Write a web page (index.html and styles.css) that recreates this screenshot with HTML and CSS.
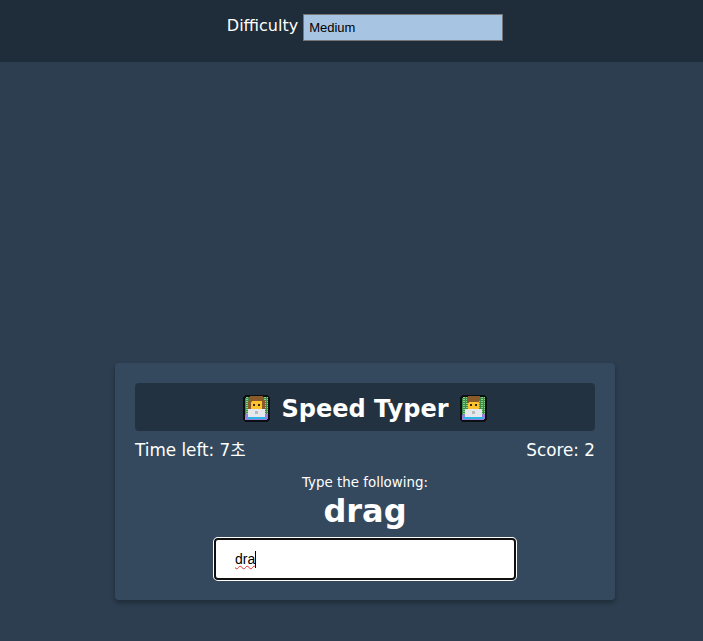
FILE: index.html
```html
<!DOCTYPE html>
<html lang="en">
<head>
    <meta charset="UTF-8">
    <meta name="viewport" content="width=device-width, initial-scale=1.0">
    <title>Speed Typer</title>
    <link rel="stylesheet" href="styles.css">
</head>
<body>
    <!-- Difficulty bar -->
    <div class="settings">
        <label class="settings-label" for="difficulty">Difficulty</label>
        <div class="difficulty-select" id="difficulty">Medium</div>
    </div>

    <div class="stage">
        <div class="game-card">
            <h2 class="game-title">
                <svg class="emoji" viewBox="0 0 27 27" shape-rendering="crispEdges">
                    <defs>
                        <pattern id="matrix" width="3" height="2" patternUnits="userSpaceOnUse">
                            <rect width="3" height="2" fill="#3f8a4a"/>
                            <rect width="2" height="1" fill="#86d283"/>
                        </pattern>
                    </defs>
                    <rect width="27" height="27" rx="4" fill="#0b0f14"/>
                    <rect x="2" y="2" width="23" height="23" rx="2" fill="url(#matrix)"/>
                    <rect x="2" y="19" width="23" height="6" rx="2" fill="#9a7fd8"/>
                    <rect x="6" y="1" width="15" height="6" rx="3" fill="#8a5a2b"/>
                    <rect x="5" y="5" width="17" height="10" rx="2" fill="#8a5a2b"/>
                    <rect x="8" y="6" width="11" height="9" rx="2" fill="#fdc22f"/>
                    <rect x="10" y="9" width="2" height="2" fill="#3a2a10"/>
                    <rect x="15" y="9" width="2" height="2" fill="#3a2a10"/>
                    <rect x="5" y="14" width="17" height="9" fill="#e6e8eb"/>
                    <rect x="12" y="16" width="3" height="3" fill="#b5bbc1"/>
                    <rect x="4" y="22" width="19" height="2" fill="#2fb4e6"/>
                </svg>
                Speed Typer
                <svg class="emoji" viewBox="0 0 27 27" shape-rendering="crispEdges">
                    <rect width="27" height="27" rx="4" fill="#0b0f14"/>
                    <rect x="2" y="2" width="23" height="23" rx="2" fill="url(#matrix)"/>
                    <rect x="2" y="19" width="23" height="6" rx="2" fill="#9a7fd8"/>
                    <rect x="7" y="1" width="13" height="5" rx="2" fill="#8a5a2b"/>
                    <rect x="7" y="5" width="12" height="3" fill="#8a5a2b"/>
                    <rect x="8" y="7" width="11" height="8" rx="2" fill="#fdc22f"/>
                    <rect x="10" y="9" width="2" height="2" fill="#3a2a10"/>
                    <rect x="15" y="9" width="2" height="2" fill="#3a2a10"/>
                    <rect x="5" y="14" width="17" height="9" fill="#e6e8eb"/>
                    <rect x="12" y="16" width="3" height="3" fill="#b5bbc1"/>
                    <rect x="4" y="22" width="19" height="2" fill="#2fb4e6"/>
                </svg>
            </h2>

            <div class="game-stats">
                <span>Time left: 7초</span>
                <span>Score: 2</span>
            </div>

            <div class="prompt">Type the following:</div>
            <div class="word">drag</div>

            <div class="word-input"><span class="typed">dra</span><span class="caret"></span></div>
        </div>
    </div>
</body>
</html>
```

FILE: styles.css
```css
* {
    box-sizing: border-box;
    margin: 0;
    padding: 0;
}

body {
    background: #2c3e50;
    color: #fff;
    font-family: Verdana, "DejaVu Sans", "Noto Sans CJK KR", sans-serif;
    height: 641px;
    display: flex;
    flex-direction: column;
    overflow: hidden;
}

.settings {
    height: 62px;
    background: #1f2c39;
    display: flex;
    justify-content: center;
    align-items: flex-start;
    gap: 5px;
    padding: 14px 0 0 27px;
}

.settings-label {
    font-size: 16px;
    line-height: 24px;
}

.difficulty-select {
    width: 200px;
    height: 27px;
    background: #a7c5e3;
    border: 1px solid #767676;
    color: #000;
    font-family: "Liberation Sans", Arial, sans-serif;
    font-size: 13px;
    line-height: 25px;
    padding-left: 5px;
}

.stage {
    flex: 1;
    display: flex;
    justify-content: center;
    align-items: flex-end;
    padding: 0 0 41px 27px;
}

.game-card {
    width: 500px;
    background: #34495e;
    border-radius: 4px;
    padding: 20px 20px 19px;
    box-shadow: 0 3px 5px rgba(0, 0, 0, 0.3);
    display: flex;
    flex-direction: column;
    align-items: center;
}

.game-title {
    width: 100%;
    height: 48px;
    background: #233240;
    border-radius: 4px;
    font-size: 24px;
    padding-top: 3px;
    display: flex;
    justify-content: center;
    align-items: center;
    gap: 11px;
}

.emoji {
    width: 27px;
    height: 27px;
}

.game-stats {
    width: 100%;
    display: flex;
    justify-content: space-between;
    font-size: 16.8px;
    line-height: 24px;
    margin-top: 7px;
}

.prompt {
    font-size: 13.4px;
    line-height: 16px;
    margin-top: 13px;
}

.word {
    font-size: 32px;
    font-weight: bold;
    line-height: 38px;
    margin-top: 1px;
}

.word-input {
    width: 304px;
    height: 44px;
    margin-top: 7px;
    background: #fff;
    border: 2px solid #fff;
    border-radius: 5px;
    outline: 2px solid #101010;
    outline-offset: -3px;
    color: #000;
    font-family: "Liberation Sans", Arial, sans-serif;
    font-size: 14px;
    padding-left: 20px;
    display: flex;
    align-items: center;
}

.typed {
    text-decoration: underline wavy #e03030 1px;
}

.caret {
    width: 1px;
    height: 17px;
    background: #000;
}
```
